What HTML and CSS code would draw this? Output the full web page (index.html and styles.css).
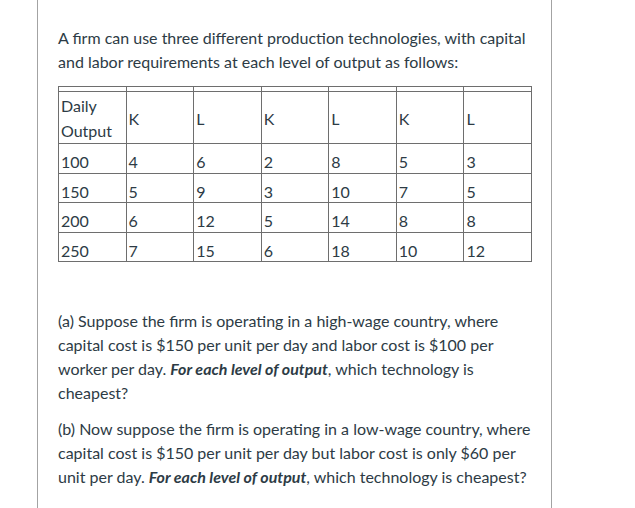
FILE: index.html
```html
<!DOCTYPE html>
<html>
<head>
<meta charset="utf-8">
<link rel="stylesheet" href="styles.css">
</head>
<body>
<div class="panel">
  <p>A firm can use three different production technologies, with capital and labor requirements at each level of output as follows:</p>
  <table class="data">
    <colgroup>
      <col><col><col><col><col><col><col>
    </colgroup>
    <tr class="spacer"><td></td><td></td><td></td><td></td><td></td><td></td><td></td></tr>
    <tr class="head"><td>Daily<br>Output</td><td>K</td><td>L</td><td>K</td><td>L</td><td>K</td><td>L</td></tr>
    <tr><td>100</td><td>4</td><td>6</td><td>2</td><td>8</td><td>5</td><td>3</td></tr>
    <tr><td>150</td><td>5</td><td>9</td><td>3</td><td>10</td><td>7</td><td>5</td></tr>
    <tr><td>200</td><td>6</td><td>12</td><td>5</td><td>14</td><td>8</td><td>8</td></tr>
    <tr><td>250</td><td>7</td><td>15</td><td>6</td><td>18</td><td>10</td><td>12</td></tr>
  </table>
  <p class="blank">&nbsp;</p>
  <p>(a) Suppose the firm is operating in a high-wage country, where capital cost is $150 per unit per day and labor cost is $100 per worker per day. <strong><em>For each level of output</em></strong>, which technology is cheapest?</p>
  <p>(b) Now suppose the firm is operating in a low-wage country, where capital cost is $150 per unit per day but labor cost is only $60 per unit per day. <strong><em>For each level of output</em></strong>, which technology is cheapest?</p>
</div>
</body>
</html>
```

FILE: styles.css
```css
html, body {
  margin: 0;
  padding: 0;
  background: #ffffff;
}

body {
  font-family: "Lato", "Open Sans", sans-serif;
  font-size: 16px;
  line-height: 24px;
  color: #2d3b45;
}

.panel {
  margin-left: 37px;
  width: 473px;
  min-height: 482px;
  padding: 26px 20px 0 20px;
  border-left: 1px solid #a3a3a3;
  border-right: 1px solid #a3a3a3;
}

.panel p {
  margin: 0 0 12px 0;
}

.data {
  border-collapse: collapse;
  table-layout: fixed;
  width: 474px;
  margin: 0 0 11px 0;
}

.data td {
  border: 1px solid #6e6e6e;
  padding: 8px 2px 0 2px;
  line-height: 20.5px;
  vertical-align: top;
}

.data tr.spacer td {
  padding: 0;
  height: 4px;
  line-height: 0;
}

.data tr.head td {
  padding: 1px 2px 0 2px;
  line-height: 25px;
  vertical-align: middle;
}
```
